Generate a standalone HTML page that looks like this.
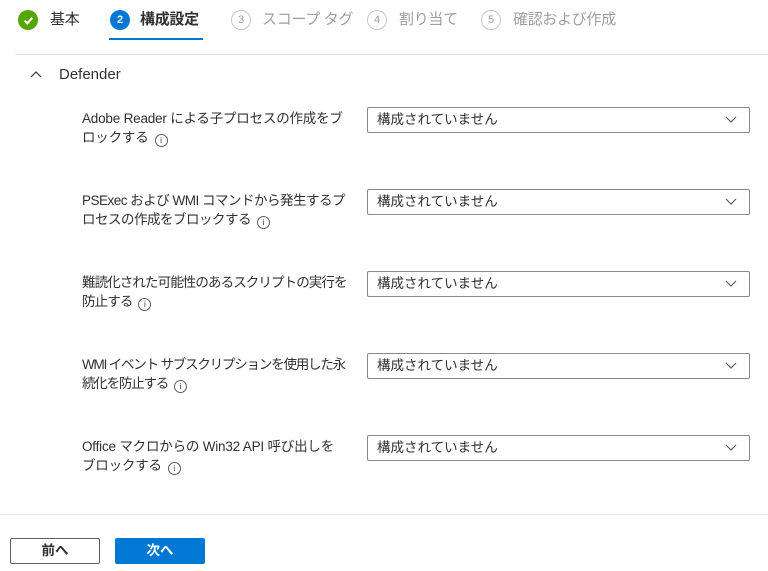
<!DOCTYPE html>
<html><head><meta charset="utf-8"><style>
body{margin:0;width:768px;height:571px;background:#fff;font-family:"Liberation Sans","Noto Sans CJK JP",sans-serif;color:#323130;position:relative;overflow:hidden}
.a{position:absolute}
.tx{position:absolute;top:10px;font-size:15px;line-height:20px;white-space:nowrap;letter-spacing:-0.3px}
.c{position:absolute;top:10px;width:20px;height:20px;border-radius:50%;box-sizing:border-box;display:flex;align-items:center;justify-content:center;font-size:11px}
.g{color:#a19f9d}.c.g{border:1px solid #c8c6c4}
.lbl{position:absolute;left:82px;font-size:13.5px;line-height:19px;color:#323130;white-space:nowrap;letter-spacing:-0.2px}
.i{display:inline-block;width:11px;height:11px;border:1px solid #605e5c;border-radius:50%;font-size:8px;line-height:11px;text-align:center;margin-left:6px;vertical-align:-1px;letter-spacing:0}
.dd{position:absolute;left:367px;width:383px;height:26px;box-sizing:border-box;border:1px solid #8a8886;border-radius:2px;font-size:13.5px;line-height:24px;padding-left:9px}
.dd svg{position:absolute;right:12px;top:8px}
.btn{position:absolute;top:538px;width:90px;height:26px;box-sizing:border-box;border-radius:2px;font-size:13.5px;font-weight:bold;text-align:center;line-height:24px}
</style></head><body>
<div class="c" style="left:18px;background:#57a300"><svg width="11" height="11" viewBox="0 0 10 10"><path d="M1.5 5.2L4 7.5 8.5 2.5" stroke="#fff" stroke-width="1.9" fill="none"/></svg></div>
<div class="tx" style="left:50px">基本</div>
<div class="c" style="left:110px;background:#0078d4;color:#fff;font-weight:bold">2</div>
<div class="tx" style="left:140px;font-weight:bold">構成設定</div>
<div class="a" style="left:109px;top:38px;width:94px;height:2px;background:#0078d4"></div>
<div class="c g" style="left:231px">3</div><div class="tx g" style="left:262px">スコープ タグ</div>
<div class="c g" style="left:367px">4</div><div class="tx g" style="left:399px">割り当て</div>
<div class="c g" style="left:481px">5</div><div class="tx g" style="left:513px">確認および作成</div>
<div class="a" style="left:15px;right:0;top:54px;height:1px;background:#e1dfdd"></div>
<svg class="a" style="left:30px;top:70px" width="12" height="8" viewBox="0 0 12 8"><path d="M1 7L6 2l5 5" stroke="#323130" stroke-width="1.2" fill="none"/></svg>
<div class="a" style="left:59px;top:65px;font-size:15px;line-height:20px">Defender</div>

<div class="lbl" style="top:109px">Adobe Reader による子プロセスの作成をブ<br>ロックする<span class="i">i</span></div>
<div class="dd" style="top:107px">構成されていません<svg width="12" height="8" viewBox="0 0 12 8"><path d="M1 1l5 5 5-5" stroke="#605e5c" stroke-width="1.2" fill="none"/></svg></div>
<div class="lbl" style="top:191px;letter-spacing:-0.5px">PSExec および WMI コマンドから発生するプ<br>ロセスの作成をブロックする<span class="i">i</span></div>
<div class="dd" style="top:189px">構成されていません<svg width="12" height="8" viewBox="0 0 12 8"><path d="M1 1l5 5 5-5" stroke="#605e5c" stroke-width="1.2" fill="none"/></svg></div>
<div class="lbl" style="top:273px;letter-spacing:-0.9px">難読化された可能性のあるスクリプトの実行を<br>防止する<span class="i">i</span></div>
<div class="dd" style="top:271px">構成されていません<svg width="12" height="8" viewBox="0 0 12 8"><path d="M1 1l5 5 5-5" stroke="#605e5c" stroke-width="1.2" fill="none"/></svg></div>
<div class="lbl" style="top:355px;letter-spacing:-1.2px">WMI イベント サブスクリプションを使用した永<br>続化を防止する<span class="i">i</span></div>
<div class="dd" style="top:353px">構成されていません<svg width="12" height="8" viewBox="0 0 12 8"><path d="M1 1l5 5 5-5" stroke="#605e5c" stroke-width="1.2" fill="none"/></svg></div>
<div class="lbl" style="top:437px">Office マクロからの Win32 API 呼び出しを<br>ブロックする<span class="i">i</span></div>
<div class="dd" style="top:435px">構成されていません<svg width="12" height="8" viewBox="0 0 12 8"><path d="M1 1l5 5 5-5" stroke="#605e5c" stroke-width="1.2" fill="none"/></svg></div>

<div class="a" style="left:0;right:0;top:514px;height:1px;background:#edebe9"></div>
<div class="btn" style="left:10px;border:1px solid #605e5c;color:#323130">前へ</div>
<div class="btn" style="left:115px;background:#0078d4;color:#fff;border:1px solid #0078d4">次へ</div>
</body></html>
